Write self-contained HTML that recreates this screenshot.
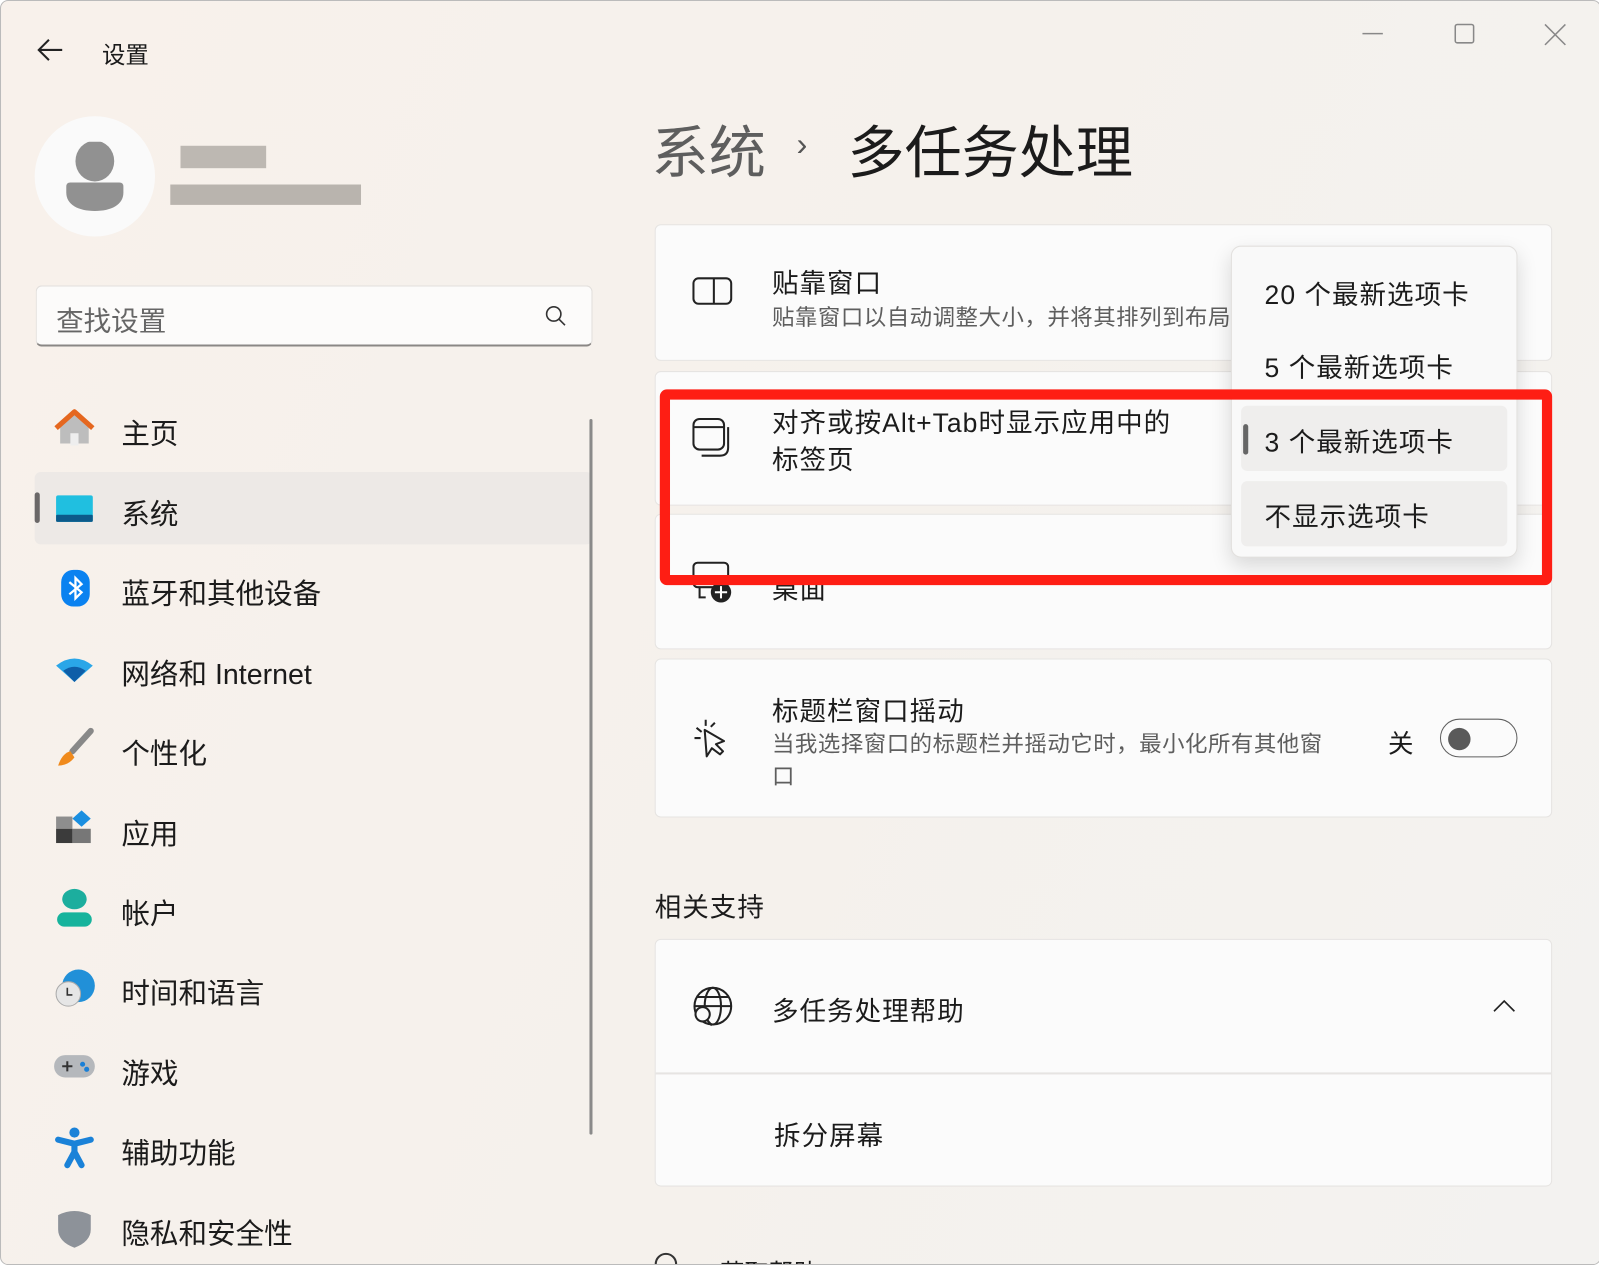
<!DOCTYPE html>
<html><head><meta charset="utf-8"><style>
html,body{margin:0;padding:0;width:1599px;height:1263px;overflow:hidden;background:#fff}
#w{position:absolute;left:0;top:0;width:1568px;height:1239px;transform:scale(1.0198,1.0194);transform-origin:0 0;background:linear-gradient(110deg,#f8f1eb 0%,#f5f1ec 50%,#f3f2f0 100%);border:1px solid #bbb;border-radius:8px;overflow:hidden;font-family:"Liberation Sans","Noto Sans CJK SC",sans-serif;color:#1b1b1b}
.a{position:absolute}
.card{position:absolute;left:641px;width:880px;background:#fbfbfb;border:1px solid #e6e4e2;border-radius:6px;box-sizing:border-box}
.nav{position:absolute;left:118px;font-size:28px;color:#1b1b1b}
.ic{position:absolute;left:52px}
.t{font-size:26px;letter-spacing:1px}
.s{font-size:22px;color:#5e5e5e;letter-spacing:.5px}
</style></head><body><div id="w">
<svg class="a" style="left:34px;top:36px" width="28" height="24"><path d="M26 12H3M13 2L3 12l10 10" stroke="#222" stroke-width="2" fill="none"/></svg>
<div class="a" style="left:99px;top:34px;font-size:23px">设置</div>
<svg class="a" style="left:1334px;top:20px" width="210" height="26"><path d="M1 12h20" stroke="#888" stroke-width="1.5"/><rect x="92" y="3" width="18" height="18" rx="2" fill="none" stroke="#888" stroke-width="1.5"/><path d="M180 3l20 20M200 3l-20 20" stroke="#888" stroke-width="1.5"/></svg>
<div class="a" style="left:33px;top:113px;width:118px;height:118px;border-radius:50%;background:#fafafa"></div>
<svg class="a" style="left:62px;top:138px" width="60" height="70"><ellipse cx="30" cy="19" rx="19" ry="20" fill="#919191"/><path d="M2 44q0-4 4-4h48q4 0 4 4v6c0 12-12 18-28 18S2 62 2 50z" fill="#919191"/></svg>
<div class="a" style="left:176px;top:142px;width:84px;height:22px;background:#bdb8b2"></div>
<div class="a" style="left:166px;top:180px;width:187px;height:20px;background:#b9b4ae"></div>
<div class="a" style="left:34px;top:279px;width:546px;height:60px;background:#fcfbfa;border:1px solid #e2dfdc;border-bottom:2px solid #8a8785;border-radius:6px;box-sizing:border-box"></div>
<div class="a" style="left:54px;top:292px;font-size:27px;color:#666">查找设置</div>
<svg class="a" style="left:532px;top:297px" width="24" height="24"><circle cx="10" cy="10" r="7" fill="none" stroke="#333" stroke-width="1.6"/><path d="M15 15l6 6" stroke="#333" stroke-width="1.6"/></svg>
<div class="a" style="left:33px;top:462px;width:547px;height:71px;background:#ede9e6;border-radius:6px"></div>
<div class="a" style="left:33px;top:482px;width:5px;height:30px;background:#6b6868;border-radius:3px"></div>
<div class="a" style="left:577px;top:410px;width:3px;height:702px;background:#8a8a8a;border-radius:2px"></div>
<svg class="ic" style="top:398px" width="40" height="40"><path d="M6 20L20 8l14 12v16H6z" fill="#bdbdbd"/><path d="M2 21L20 5l18 16" stroke="#e5671f" stroke-width="5" fill="none" stroke-linejoin="round"/><rect x="16" y="26" width="8" height="12" fill="#eee"/></svg>
<div class="nav" style="top:403px">主页</div>
<svg class="ic" style="top:482px" width="40" height="32"><rect x="2" y="3" width="36" height="26" rx="2" fill="#20bfe0"/><rect x="2" y="22" width="36" height="7" rx="1" fill="#0c5a8a"/></svg>
<div class="nav" style="top:482px">系统</div>
<svg class="ic" style="top:556px" width="40" height="40"><rect x="7" y="2" width="28" height="36" rx="12" fill="#0a82f0"/><path d="M15 14l12 10-6 6V10l6 6-12 10" stroke="#fff" stroke-width="2.2" fill="none"/></svg>
<div class="nav" style="top:560px">蓝牙和其他设备</div>
<svg class="ic" style="top:640px" width="40" height="32"><path d="M2 12q18-14 36 0L20 28z" fill="#2aa6e8"/><path d="M9 17q11-8 22 0L20 28z" fill="#0e5ea8"/></svg>
<div class="nav" style="top:639px">网络和 Internet</div>
<svg class="ic" style="top:712px" width="40" height="40"><path d="M36 4L18 24" stroke="#888" stroke-width="6" stroke-linecap="round"/><path d="M16 24q-8 2-12 14q10 0 16-8z" fill="#f08a1c"/></svg>
<div class="nav" style="top:717px">个性化</div>
<svg class="ic" style="top:792px" width="40" height="36"><rect x="2" y="8" width="16" height="12" fill="#8e8e8e"/><rect x="2" y="20" width="16" height="14" fill="#3b3b3b"/><rect x="18" y="20" width="18" height="14" fill="#777"/><path d="M27 2l9 8-9 8-9-8z" fill="#1b8fe0"/></svg>
<div class="nav" style="top:796px">应用</div>
<svg class="ic" style="top:870px" width="40" height="40"><ellipse cx="20" cy="11" rx="12" ry="10" fill="#1cae9e"/><rect x="3" y="24" width="34" height="14" rx="7" fill="#16b39c"/></svg>
<div class="nav" style="top:874px">帐户</div>
<svg class="ic" style="top:948px" width="42" height="42"><circle cx="24" cy="18" r="16" fill="#2190d8"/><circle cx="14" cy="26" r="12" fill="#e6e6e6" stroke="#aaa"/><path d="M13 20v7h5" stroke="#333" stroke-width="1.6" fill="none"/></svg>
<div class="nav" style="top:952px">时间和语言</div>
<svg class="ic" style="top:1030px" width="42" height="30"><rect x="0" y="4" width="40" height="22" rx="11" fill="#b5b8bc"/><path d="M8 15h10M13 10v10" stroke="#333" stroke-width="2"/><circle cx="28" cy="13" r="2.5" fill="#1a7fd6"/><circle cx="32" cy="18" r="2.5" fill="#1a7fd6"/></svg>
<div class="nav" style="top:1031px">游戏</div>
<svg class="ic" style="top:1104px" width="40" height="42"><circle cx="20" cy="6" r="5" fill="#1a82d8"/><path d="M4 13l16 4 16-4M20 17v8l-7 13M20 25l7 13" stroke="#1a82d8" stroke-width="6" fill="none" stroke-linecap="round" stroke-linejoin="round"/></svg>
<div class="nav" style="top:1109px">辅助功能</div>
<svg class="ic" style="top:1185px" width="40" height="40"><path d="M4 6q16-8 32 0v14q0 12-16 18Q4 32 4 20z" fill="#8d9299"/></svg>
<div class="nav" style="top:1188px">隐私和安全性</div>

<div class="a" style="left:638px;top:104px;font-size:56px;color:#5e5e5e">系统</div>
<div class="a" style="left:780px;top:122px;font-size:32px;color:#555">›</div>
<div class="a" style="left:830px;top:104px;font-size:56px;color:#1b1b1b">多任务处理</div>

<div class="card" style="top:219px;height:134px"></div>
<svg class="a" style="left:677px;top:270px" width="42" height="30"><rect x="2" y="2" width="37" height="25" rx="5" fill="none" stroke="#222" stroke-width="2"/><path d="M22 2v25" stroke="#222" stroke-width="2"/></svg>
<div class="a t" style="left:756px;top:257px">贴靠窗口</div>
<div class="a s" style="left:756px;top:293px;width:452px;white-space:nowrap;overflow:hidden">贴靠窗口以自动调整大小，并将其排列到布局</div>

<div class="card" style="top:363px;height:132px"></div>
<svg class="a" style="left:677px;top:408px" width="42" height="42"><rect x="2" y="2" width="30" height="30" rx="6" fill="none" stroke="#222" stroke-width="2"/><path d="M2 10h30" stroke="#222" stroke-width="2"/><path d="M36 10v20q0 8-8 8H10" stroke="#222" stroke-width="2" fill="none"/></svg>
<div class="a t" style="left:756px;top:396px;line-height:36px">对齐或按Alt+Tab时显示应用中的<br>标签页</div>

<div class="card" style="top:503px;height:133px"></div>
<svg class="a" style="left:677px;top:549px" width="42" height="42"><rect x="2" y="2" width="34" height="24" rx="4" fill="none" stroke="#222" stroke-width="2"/><path d="M8 26v10h6" stroke="#222" stroke-width="2" fill="none"/><circle cx="29" cy="31" r="10" fill="#222"/><path d="M29 25v12M23 31h12" stroke="#fff" stroke-width="2"/></svg>
<div class="a t" style="left:756px;top:557px">桌面</div>

<div class="card" style="top:645px;height:156px"></div>
<svg class="a" style="left:678px;top:703px" width="40" height="42"><path d="M4 10l5 4M13 2v6M22 5l-4 4M2 20h6M12 12l2 26 5-8 8 6 3-3-7-7 8-3z" stroke="#222" stroke-width="2" fill="none" stroke-linejoin="round"/></svg>
<div class="a t" style="left:756px;top:677px">标题栏窗口摇动</div>
<div class="a s" style="left:756px;top:713px;line-height:32px">当我选择窗口的标题栏并摇动它时，最小化所有其他窗<br>口</div>
<div class="a" style="left:1360px;top:709px;font-size:25px">关</div>
<div class="a" style="left:1411px;top:704px;width:76px;height:38px;border:1.5px solid #5f5f5f;border-radius:20px;box-sizing:border-box"></div>
<div class="a" style="left:1419px;top:713px;width:22px;height:22px;border-radius:50%;background:#5a5a5a"></div>

<div class="a" style="left:641px;top:869px;font-size:26px;letter-spacing:1px">相关支持</div>
<div class="card" style="top:920px;height:243px"></div>
<div class="a" style="left:642px;top:1051px;width:878px;height:2px;background:#e6e4e2"></div>
<svg class="a" style="left:677px;top:966px" width="42" height="42"><circle cx="21" cy="20" r="18" fill="none" stroke="#222" stroke-width="2"/><ellipse cx="21" cy="20" rx="8" ry="18" fill="none" stroke="#222" stroke-width="2"/><path d="M3 20h36M6 11h30" stroke="#222" stroke-width="2"/><circle cx="11" cy="28" r="7" fill="#fbfbfb" stroke="#222" stroke-width="2"/><path d="M15 33l5 6" stroke="#222" stroke-width="2"/></svg>
<div class="a t" style="left:756px;top:971px">多任务处理帮助</div>
<svg class="a" style="left:1462px;top:978px" width="24" height="16"><path d="M2 13L12 3l10 10" stroke="#222" stroke-width="1.6" fill="none"/></svg>
<div class="a t" style="left:758px;top:1093px">拆分屏幕</div>
<div class="a" style="left:641px;top:1228px;width:18px;height:18px;border:2px solid #333;border-radius:50%"></div>
<div class="a" style="left:705px;top:1228px;font-size:24px">获取帮助</div>

<div class="a" style="left:1206px;top:240px;width:281px;height:306px;background:#f9f9f9;border:1px solid #e2e0de;border-radius:10px;box-shadow:0 8px 20px rgba(0,0,0,.14);box-sizing:border-box"></div>
<div class="a" style="left:1216px;top:397px;width:261px;height:64px;background:#efeeed;border-radius:6px"></div>
<div class="a" style="left:1216px;top:471px;width:261px;height:64px;background:#efeeed;border-radius:6px"></div>
<div class="a" style="left:1218px;top:415px;width:5px;height:30px;background:#666;border-radius:3px"></div>
<div class="a t" style="left:1239px;top:268px">20 个最新选项卡</div>
<div class="a t" style="left:1239px;top:340px">5 个最新选项卡</div>
<div class="a t" style="left:1239px;top:413px">3 个最新选项卡</div>
<div class="a t" style="left:1239px;top:486px">不显示选项卡</div>

<div class="a" style="left:646px;top:381px;width:875px;height:192px;border:10px solid #fe1e14;border-radius:7px;box-sizing:border-box"></div>
</div></body></html>
